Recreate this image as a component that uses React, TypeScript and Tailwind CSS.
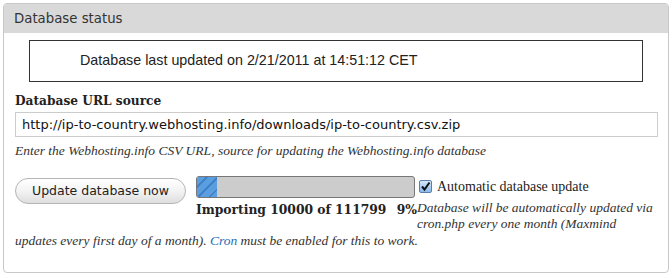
import React from "react";

const serif = "font-['Liberation_Serif',serif]";
const boldSerif = "font-['DejaVu_Serif',serif] font-bold";
const sans = "font-['DejaVu_Sans',sans-serif]";

export default function App() {
  return (
    <div className="w-[672px] h-[278px] bg-white pt-[3px] pl-[3px]">
      <div className="w-[666px] h-[270px] border border-[#c8c8c8] rounded-[4px] overflow-hidden bg-white text-[#222]">
        <div className={`h-[29px] bg-[#d9d9d9] pl-[10px] pt-[6px] text-[13.3px] leading-[18px] text-[#333] ${sans}`}>
          Database status
        </div>
        <div className="px-[11px] pt-[7px]">
          <div className="ml-[14px] w-[614px] h-[42px] border border-[#333] flex items-center pl-[50px] text-[14.3px] text-[#222] font-['Liberation_Sans',sans-serif]">
            Database last updated on 2/21/2011 at 14:51:12 CET
          </div>
          <div className={`mt-[11px] text-[12.2px] leading-[16px] text-[#222] ${boldSerif}`}>
            Database URL source
          </div>
          <div className={`mt-[3px] w-[643px] h-[25px] border border-[#ccc] flex items-center pl-[6px] text-[13px] text-[#111] ${sans}`}>
            http://ip-to-country.webhosting.info/downloads/ip-to-country.csv.zip
          </div>
          <div className={`mt-[6px] text-[13.5px] italic leading-[15px] text-[#333] ${serif}`}>
            Enter the Webhosting.info CSV URL, source for updating the Webhosting.info database
          </div>
          <div className="mt-[18px]">
            <div className="float-left flex items-start mb-[8px]">
              <button className={`mt-[2px] w-[171px] h-[26px] rounded-full border border-[#b5b5b5] bg-gradient-to-b from-[#ffffff] via-[#f3f3f3] to-[#dedede] text-[12.5px] text-[#222] ${sans}`}>
                Update database now
              </button>
              <div className="ml-[10px] w-[221px]">
                <div className="w-[219px] h-[22px] rounded-[3px] border border-[#777] bg-[#cccccc] overflow-hidden">
                  <div className="h-full w-[20px] bg-[repeating-linear-gradient(135deg,#5b9ee0_0px,#5b9ee0_6px,#3f82c8_6px,#3f82c8_8px)]" />
                </div>
                <div className={`flex justify-between whitespace-nowrap text-[12.3px] leading-[18px] mt-[3px] text-[#222] ${boldSerif}`}>
                  <span>Importing 10000 of 111799</span>
                  <span>9%</span>
                </div>
              </div>
            </div>
            <label className={`flex items-center h-[20px] text-[14px] text-[#222] ${serif}`}>
              <span className="ml-[2px] mr-[5px] w-[13px] h-[13px] rounded-[2px] border border-[#5a7ea8] bg-gradient-to-b from-[#d6e8fb] to-[#8ab8ea] flex items-center justify-center">
                <svg width="11" height="11" viewBox="0 0 11 11">
                  <path d="M2 5.5 L4.5 8.5 L9.5 1.5" fill="none" stroke="#111" strokeWidth="2" />
                </svg>
              </span>
              Automatic database update
            </label>
            <p className={`mt-[4px] text-[13.5px] italic leading-[16.3px] text-[#333] ${serif}`}>
              Database will be automatically updated via cron.php every one month (Maxmind updates every first day of a month).{" "}
              <a className="text-[#2a6db8]">Cron</a> must be enabled for this to work.
            </p>
          </div>
        </div>
      </div>
    </div>
  );
}
